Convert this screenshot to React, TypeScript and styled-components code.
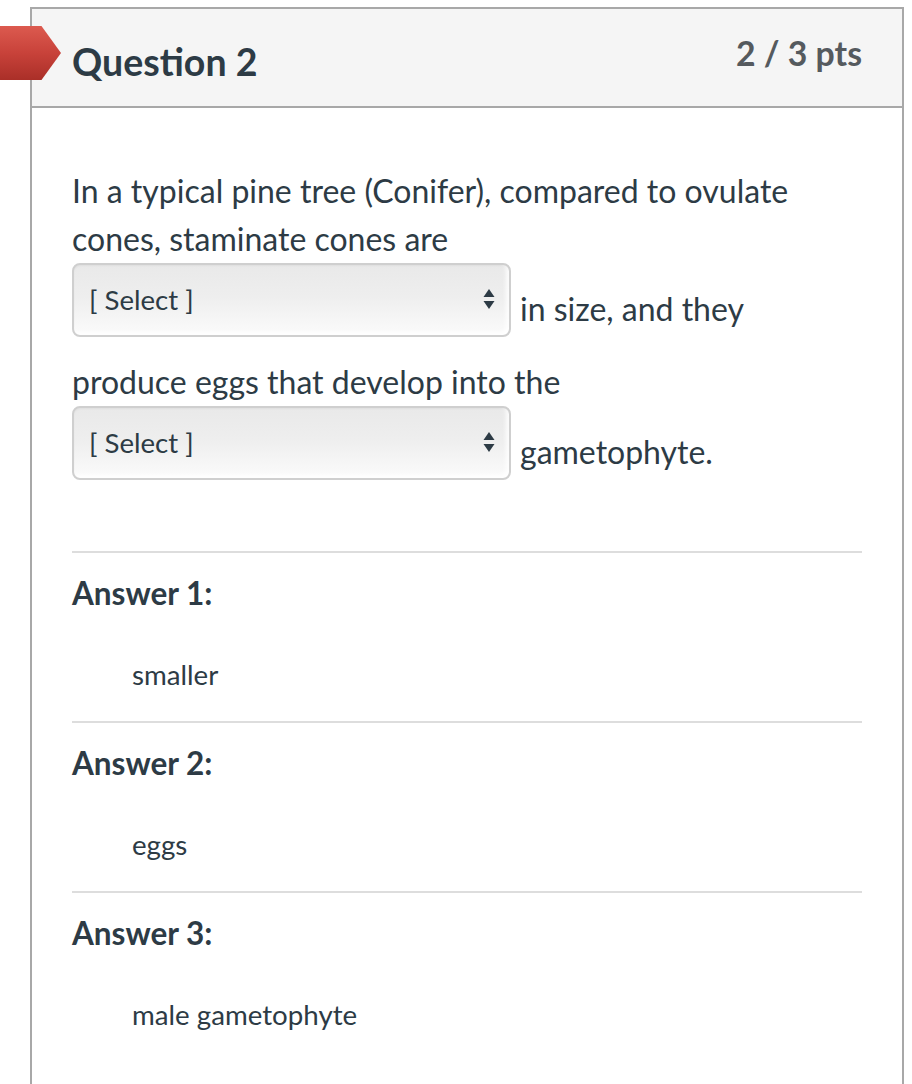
import React from "react";
import styled, { createGlobalStyle } from "styled-components";

const colors = {
  text: "#2d3b45",
  muted: "#555a5e",
  border: "#a8a8a8",
  headerBg: "#f5f5f5",
  divider: "#dddddd",
};

const GlobalStyle = createGlobalStyle`
  html, body {
    margin: 0;
    padding: 0;
    background: #ffffff;
  }
  body {
    font-family: Lato, "Open Sans", "Liberation Sans", sans-serif;
    color: ${colors.text};
  }
`;

interface Answer {
  label: string;
  value: string;
}

const answers: Answer[] = [
  { label: "Answer 1:", value: "smaller" },
  { label: "Answer 2:", value: "eggs" },
  { label: "Answer 3:", value: "male gametophyte" },
];

const SelectBox: React.FC = () => (
  <Select>
    <SelectLabel>[ Select ]</SelectLabel>
    <Arrows>
      <svg width="12" height="22" viewBox="0 0 12 22">
        <path d="M6 1 L11.5 9 L0.5 9 Z" fill={colors.text} />
        <path d="M6 21 L11.5 13 L0.5 13 Z" fill={colors.text} />
      </svg>
    </Arrows>
  </Select>
);

const App: React.FC = () => {
  return (
    <Page>
      <GlobalStyle />
      <Card>
        <Flag />
        <Header>
          <Title>Question 2</Title>
          <Points>2 / 3 pts</Points>
        </Header>
        <Body>
          <Paragraph>
            In a typical pine tree (Conifer), compared to ovulate cones, staminate cones are
          </Paragraph>
          <BlankRow>
            <SelectBox />
            <Trailing>in size, and they</Trailing>
          </BlankRow>
          <Paragraph>produce eggs that develop into the</Paragraph>
          <BlankRow>
            <SelectBox />
            <Trailing>gametophyte.</Trailing>
          </BlankRow>
          <Answers>
            {answers.map((a) => (
              <AnswerBlock key={a.label}>
                <AnswerLabel>{a.label}</AnswerLabel>
                <AnswerValue>{a.value}</AnswerValue>
              </AnswerBlock>
            ))}
          </Answers>
        </Body>
      </Card>
    </Page>
  );
};

const Page = styled.div`
  padding: 7px 8px 0 30px;
  height: 1084px;
  box-sizing: border-box;
  overflow: hidden;
`;

const Card = styled.div`
  position: relative;
  width: 874px;
  min-height: 1077px;
  box-sizing: border-box;
  border: 2px solid ${colors.border};
  border-bottom: none;
`;

const Flag = styled.div`
  position: absolute;
  left: -32px;
  top: 17px;
  width: 61px;
  height: 54px;
  background: linear-gradient(to bottom, #dc5a4f 0%, #c8423a 50%, #aa2f28 100%);
  clip-path: polygon(0 0, 68% 0, 100% 50%, 68% 100%, 0 100%);
`;

const Header = styled.div`
  height: 97px;
  background: ${colors.headerBg};
  border-bottom: 2px solid ${colors.border};
  display: flex;
  justify-content: space-between;
  align-items: flex-start;
  padding: 0 40px;
`;

const Title = styled.h2`
  margin: 33px 0 0;
  font-size: 37.5px;
  line-height: 40px;
  font-weight: 700;
  color: ${colors.text};
`;

const Points = styled.div`
  margin-top: 26px;
  font-size: 33.8px;
  line-height: 36px;
  font-weight: 700;
  color: ${colors.muted};
`;

const Body = styled.div`
  padding: 59px 40px 0 40px;
`;

const Paragraph = styled.p`
  margin: 0;
  font-size: 32px;
  line-height: 48px;
`;

const BlankRow = styled.div`
  display: flex;
  align-items: flex-start;
  gap: 9px;
  margin-bottom: 21px;
`;

const Select = styled.div`
  width: 439px;
  height: 74px;
  flex-shrink: 0;
  box-sizing: border-box;
  border: 2px solid #cfcfcf;
  border-radius: 8px;
  background: linear-gradient(to bottom, #e9e9e9 0%, #eeeeee 45%, #fbfbfb 100%);
  box-shadow: inset -3px -3px 4px rgba(255, 255, 255, 0.9), inset 0 1px 2px rgba(0, 0, 0, 0.05);
  display: flex;
  align-items: center;
  justify-content: space-between;
  padding: 0 14px 2px 15px;
`;

const SelectLabel = styled.span`
  font-size: 27.6px;
  color: ${colors.text};
`;

const Arrows = styled.span`
  display: flex;
  align-items: center;
`;

const Trailing = styled.span`
  margin-top: 22px;
  font-size: 32px;
  line-height: 48px;
`;

const Answers = styled.div`
  margin-top: 71px;
`;

const AnswerBlock = styled.div`
  border-top: 2px solid ${colors.divider};
  height: 168px;
`;

const AnswerLabel = styled.div`
  margin-top: 20px;
  font-size: 31.5px;
  line-height: 40px;
  font-weight: 700;
`;

const AnswerValue = styled.div`
  margin-top: 44px;
  padding-left: 60px;
  font-size: 27.7px;
  line-height: 36px;
`;

export default App;
